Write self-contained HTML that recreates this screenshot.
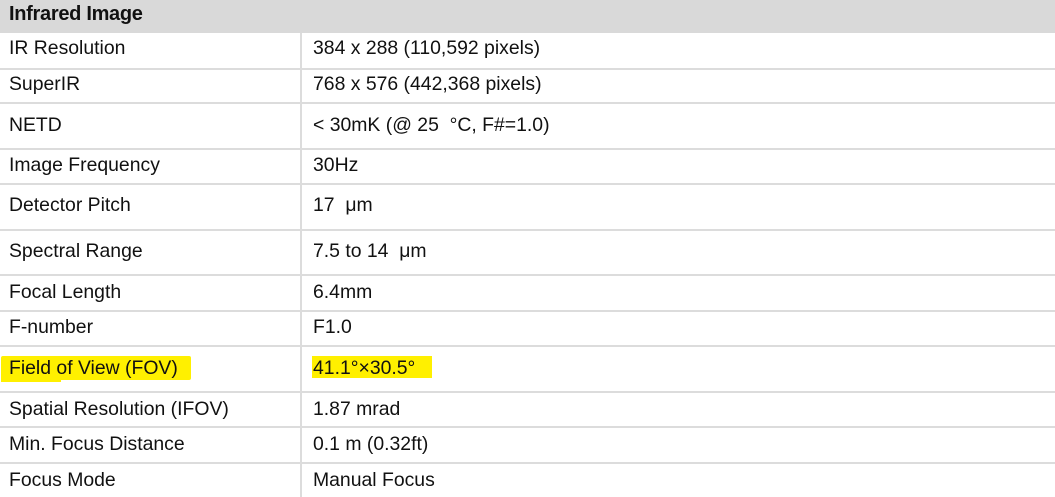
<!DOCTYPE html>
<html><head><meta charset="utf-8"><style>
body{margin:0;width:1055px;height:497px;background:#fff;position:relative;overflow:hidden;font-family:"Liberation Sans",Arial,sans-serif;color:#111;}
.h{position:absolute;left:0;top:0;width:1055px;height:33px;background:#d9d9d9;}
.h span{position:absolute;left:9px;top:3px;font-size:20px;font-weight:bold;letter-spacing:-0.3px;}
.l{position:absolute;left:0;width:1055px;height:2px;background:#dcdcdc;}
.v{position:absolute;left:300px;top:33px;width:2px;height:464px;background:#dcdcdc;}
.t{position:absolute;font-size:19.4px;line-height:22px;white-space:nowrap;}
.hl{position:absolute;background:#fff000;}
</style></head><body>
<div class="h"><span>Infrared Image</span></div>
<div class="hl" style="left:1px;top:356px;width:190px;height:24px;border-radius:2px"></div>
<div class="hl" style="left:1px;top:376px;width:60px;height:6px"></div>
<div class="hl" style="left:312px;top:356px;width:120px;height:22px"></div>
<div class="v"></div>
<div class="l" style="top:68px"></div>
<div class="l" style="top:102px"></div>
<div class="l" style="top:148px"></div>
<div class="l" style="top:183px"></div>
<div class="l" style="top:229px"></div>
<div class="l" style="top:274px"></div>
<div class="l" style="top:310px"></div>
<div class="l" style="top:345px"></div>
<div class="l" style="top:391px"></div>
<div class="l" style="top:426px"></div>
<div class="l" style="top:462px"></div>

<div class="t" style="left:9px;top:37px">IR Resolution</div><div class="t" style="left:313px;top:37px">384 x 288 (110,592 pixels)</div>
<div class="t" style="left:9px;top:73px">SuperIR</div><div class="t" style="left:313px;top:73px">768 x 576 (442,368 pixels)</div>
<div class="t" style="left:9px;top:114px">NETD</div><div class="t" style="left:313px;top:114px">&lt; 30mK (@ 25 &nbsp;°C, F#=1.0)</div>
<div class="t" style="left:9px;top:154px">Image Frequency</div><div class="t" style="left:313px;top:154px">30Hz</div>
<div class="t" style="left:9px;top:194px">Detector Pitch</div><div class="t" style="left:313px;top:194px">17 &nbsp;μm</div>
<div class="t" style="left:9px;top:240px">Spectral Range</div><div class="t" style="left:313px;top:240px">7.5 to 14 &nbsp;μm</div>
<div class="t" style="left:9px;top:281px">Focal Length</div><div class="t" style="left:313px;top:281px">6.4mm</div>
<div class="t" style="left:9px;top:316px">F-number</div><div class="t" style="left:313px;top:316px">F1.0</div>
<div class="t" style="left:9px;top:357px">Field of View (FOV)</div><div class="t" style="left:313px;top:357px">41.1°×30.5°</div>
<div class="t" style="left:9px;top:398px">Spatial Resolution (IFOV)</div><div class="t" style="left:313px;top:398px">1.87 mrad</div>
<div class="t" style="left:9px;top:433px">Min. Focus Distance</div><div class="t" style="left:313px;top:433px">0.1 m (0.32ft)</div>
<div class="t" style="left:9px;top:469px">Focus Mode</div><div class="t" style="left:313px;top:469px">Manual Focus</div>
</body></html>
